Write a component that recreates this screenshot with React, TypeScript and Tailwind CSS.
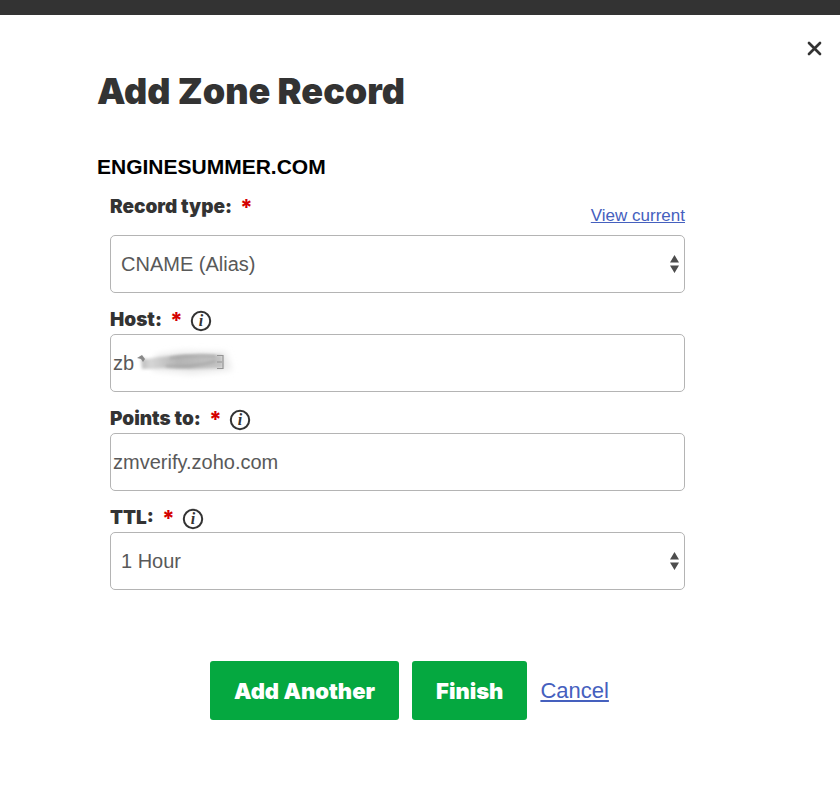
import React, { useState } from 'react';

interface LabelProps {
  htmlFor: string;
  text: string;
}

interface SelectProps {
  id: string;
  value: string;
  options: string[];
  onChange: (value: string) => void;
}

const RECORD_TYPES = ['A (Host)', 'CNAME (Alias)', 'MX (Mail Exchanger)', 'TXT (Text)', 'SRV (Service)'];
const TTL_OPTIONS = ['1/2 Hour', '1 Hour', '12 Hours', '1 Day', '1 Week'];

const InfoIcon = () => (
  <svg width="22" height="22" viewBox="0 0 22 22" aria-hidden="true">
    <circle cx="11" cy="11" r="9.2" fill="none" stroke="#333333" strokeWidth="2" />
    <text
      x="11"
      y="16"
      textAnchor="middle"
      fill="#333333"
      className="font-['Liberation_Serif',serif] text-[16px] font-bold italic"
    >
      i
    </text>
  </svg>
);

const RequiredLabel: React.FC<LabelProps> = ({ htmlFor, text }) => (
  <label htmlFor={htmlFor} className="flex gap-2 font-[Inter,sans-serif] text-[19px] leading-[26px] font-black text-[#333333]">
    {text}
    <span className="text-[22px] font-extrabold text-[#d40000]">*</span>
  </label>
);

const InfoLabel: React.FC<LabelProps> = ({ htmlFor, text }) => (
  <div className="flex h-[41px] items-end gap-[7px] pb-px">
    <RequiredLabel htmlFor={htmlFor} text={text} />
    <button type="button" aria-label={`About ${text}`} className="pb-px">
      <InfoIcon />
    </button>
  </div>
);

const SelectField: React.FC<SelectProps> = ({ id, value, options, onChange }) => (
  <div className="relative">
    <select
      id={id}
      value={value}
      onChange={(e) => onChange(e.target.value)}
      className="block h-[58px] w-full appearance-none rounded-[5px] border border-[#b4b4b4] bg-white px-[10px] pb-px text-[20px] text-[#595959]"
    >
      {options.map((option) => (
        <option key={option}>{option}</option>
      ))}
    </select>
    {/* Up / down arrows */}
    <svg className="pointer-events-none absolute top-5 right-[6px]" width="9" height="18" viewBox="0 0 9 18" aria-hidden="true">
      <path d="M4.5 0L9 7.5H0zM4.5 18L9 10.5H0z" fill="#4d4d4d" />
    </svg>
  </div>
);

const inputClass = 'block h-[58px] w-full rounded-[5px] border border-[#b4b4b4] bg-white px-[2px] text-[20px] text-[#595959]';
const buttonClass = 'h-[59px] rounded-[3px] bg-[#05a840] px-6 pt-[2px] font-[Inter,sans-serif] text-[22px] font-black text-white';

export default function App() {
  const [recordType, setRecordType] = useState('CNAME (Alias)');
  const [host, setHost] = useState('zb');
  const [pointsTo, setPointsTo] = useState('zmverify.zoho.com');
  const [ttl, setTtl] = useState('1 Hour');

  return (
    <div className="min-h-screen border-t-[15px] border-[#333333] bg-white font-['Liberation_Sans',Arial,sans-serif]">
      {/* Close */}
      <div className="flex justify-end px-[15px] pt-[22px]">
        <button type="button" aria-label="Close" className="flex size-[22px] items-center justify-center">
          <svg width="16" height="16" viewBox="0 0 16 16" aria-hidden="true">
            <path d="M3 3L14 14M14 3L3 14" stroke="#333333" strokeWidth="2.7" strokeLinecap="round" />
          </svg>
        </button>
      </div>

      <main className="pr-[142px] pb-[71px] pl-[97px]">
        <h1 className="mt-2 font-[Inter,sans-serif] text-[36px] leading-[48px] font-black text-[#333333]">Add Zone Record</h1>
        <h2 className="mt-10 text-[21px] leading-6 font-bold text-black">ENGINESUMMER.COM</h2>

        <form className="px-[13px]" onSubmit={(e) => e.preventDefault()}>
          {/* Record type */}
          <div className="flex h-14 items-start justify-between pt-[15px]">
            <RequiredLabel htmlFor="record-type" text="Record type:" />
            <a href="#current" className="mt-[10px] text-[17px] leading-6 text-[#4560be] underline">
              View current
            </a>
          </div>
          <SelectField id="record-type" value={recordType} options={RECORD_TYPES} onChange={setRecordType} />

          {/* Host */}
          <InfoLabel htmlFor="host" text="Host:" />
          <div className="relative">
            <input id="host" type="text" value={host} onChange={(e) => setHost(e.target.value)} className={inputClass} />
            {/* Smudge over the private part of the host */}
            <svg className="pointer-events-none absolute top-2 left-[22px]" width="110" height="46" viewBox="0 0 110 46" aria-hidden="true">
              <defs>
                <filter id="soft" x="-20%" y="-60%" width="140%" height="220%">
                  <feGaussianBlur stdDeviation="3" />
                </filter>
                <filter id="fine" x="-20%" y="-60%" width="140%" height="220%">
                  <feGaussianBlur stdDeviation="1.5" />
                </filter>
                <filter id="edge" x="-50%" y="-50%" width="200%" height="200%">
                  <feGaussianBlur stdDeviation="0.6" />
                </filter>
                <linearGradient id="shade" x1="0" x2="1" y1="0" y2="0">
                  <stop offset="0" stopColor="#bdbdbd" />
                  <stop offset="0.12" stopColor="#d6d6d6" />
                  <stop offset="0.45" stopColor="#b4b4b4" />
                  <stop offset="1" stopColor="#c4c4c4" />
                </linearGradient>
              </defs>
              <path d="M24 13L50 9L94 10L100 28L60 32L20 28Z" fill="#e9e9e9" filter="url(#soft)" />
              <path d="M9 15L14 17L28 15L50 13L90 13L91 26L58 27L30 26L20 27L10 27Z" fill="url(#shade)" filter="url(#fine)" />
              <path d="M5 16L10 13L13 17L11 20L9 17Z" fill="#888888" filter="url(#edge)" />
              <path d="M38 16Q60 12 84 14M34 24Q60 26 84 19" fill="none" stroke="#a0a0a0" strokeWidth="1.6" filter="url(#fine)" />
              <path d="M85 13.5H91V26.5H85M85 20H90" fill="none" stroke="#949494" strokeWidth="1.2" filter="url(#edge)" />
            </svg>
          </div>

          {/* Points to */}
          <InfoLabel htmlFor="points-to" text="Points to:" />
          <input id="points-to" type="text" value={pointsTo} onChange={(e) => setPointsTo(e.target.value)} className={inputClass} />

          {/* TTL */}
          <InfoLabel htmlFor="ttl" text="TTL:" />
          <SelectField id="ttl" value={ttl} options={TTL_OPTIONS} onChange={setTtl} />

          {/* Actions */}
          <div className="mt-[71px] flex items-center justify-center gap-[13px] pl-6">
            <button type="submit" className={buttonClass}>Add Another</button>
            <button type="submit" className={buttonClass}>Finish</button>
            <a href="#cancel" className="text-[22px] text-[#4560be] underline">Cancel</a>
          </div>
        </form>
      </main>
    </div>
  );
}
